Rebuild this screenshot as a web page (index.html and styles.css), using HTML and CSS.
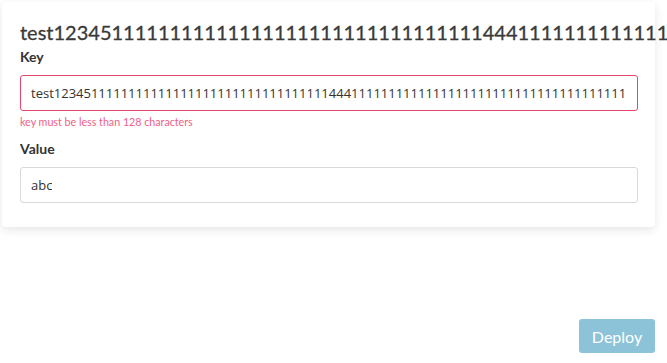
FILE: index.html
```html
<!DOCTYPE html>
<html>
<head>
<meta charset="utf-8">
<link rel="stylesheet" href="styles.css">
</head>
<body>
<div class="page">
  <div class="card">
    <div class="title">test1234511111111111111111111111111111111444111111111111111111111111111111111111111111111111111111111111111111111111111111111111111111111</div>
    <div class="field">
      <label class="label">Key</label>
      <div class="input error"><span class="input-text">test1234511111111111111111111111111111111444111111111111111111111111111111111111111111111111111111111111111111111111111111111111111111111</span></div>
      <div class="error-msg">key must be less than 128 characters</div>
    </div>
    <div class="field">
      <label class="label">Value</label>
      <div class="input"><span class="input-text">abc</span></div>
    </div>
  </div>
  <div class="actions">
    <button class="deploy">Deploy</button>
  </div>
</div>
</body>
</html>
```
FILE: styles.css
```css
html, body {
  margin: 0;
  padding: 0;
  background: #fff;
  font-family: Lato, "Noto Sans", sans-serif;
  overflow: hidden;
}
.page {
  width: 667px;
  height: 363px;
  padding: 2px 12px 0 2px;
  box-sizing: border-box;
  display: flex;
  flex-direction: column;
}
.card {
  background: #fff;
  border-radius: 4px;
  box-shadow: 0 3px 10px rgba(0,0,0,0.10);
  padding: 18px 17px 24px 18px;
}
.title {
  font-size: 20px;
  color: #3a3a3a;
  -webkit-text-stroke: 0.3px #3a3a3a;
  white-space: nowrap;
  line-height: 24px;
  width: 0;
  overflow: visible;
}
.field {
  display: flex;
  flex-direction: column;
}
.label {
  font-size: 14px;
  font-weight: bold;
  color: #333;
  line-height: 18px;
  margin-top: 4px;
  margin-bottom: 9px;
}
.field + .field .label {
  margin-top: 11px;
}
.input {
  height: 36px;
  box-sizing: border-box;
  border: 1px solid #d9d9d9;
  border-radius: 3px;
  padding: 0 10px 0 10px;
  display: flex;
  align-items: center;
  overflow: hidden;
}
.input.error {
  border-color: #e8476c;
}
.input-text {
  font-family: "Open Sans", Lato, sans-serif;
  font-size: 13px;
  color: #333;
  white-space: nowrap;
  overflow: hidden;
}
.error-msg {
  font-size: 10.7px;
  color: #ee5f86;
  line-height: 14px;
  margin-top: 4px;
}
.actions {
  display: flex;
  justify-content: flex-end;
  margin-top: 92px;
}
.deploy {
  background: #8dc3d8;
  color: #fff;
  border: none;
  border-radius: 3px;
  font-family: Lato, "Noto Sans", sans-serif;
  font-size: 16px;
  width: 76px;
  height: 34px;
  padding: 0;
}
```
